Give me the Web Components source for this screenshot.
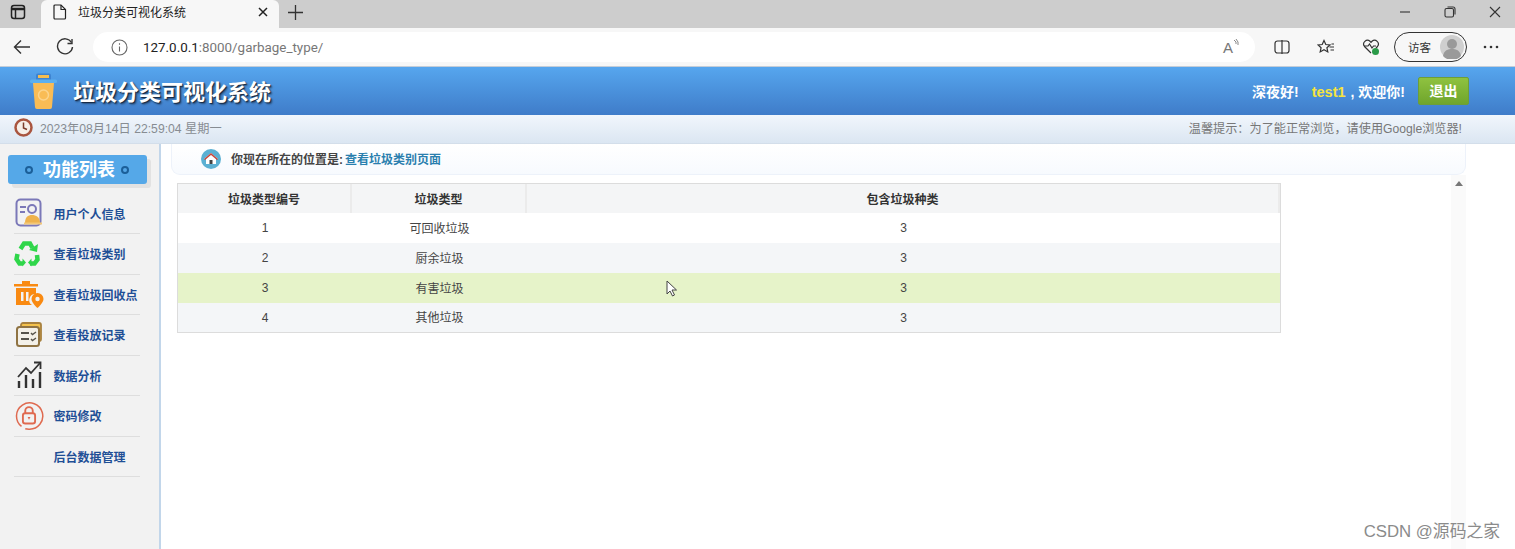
<!DOCTYPE html>
<html lang="zh">
<head>
<meta charset="utf-8">
<title>垃圾分类可视化系统</title>
<style>
  html, body { margin: 0; height: 549px; overflow: hidden; background: #fff; }
  body {
    display: flex;
    flex-direction: column;
    position: relative;
    font-family: "Liberation Sans", "Noto Sans CJK SC", sans-serif;
  }
  svg { display: block; }
</style>
</head>
<body>
  <browser-tabs></browser-tabs>
  <browser-toolbar></browser-toolbar>
  <app-header></app-header>
  <status-bar></status-bar>
  <app-body>
    <side-menu slot="menu">
      <menu-item label="用户个人信息">
        <svg slot="icon" width="30" height="30" viewBox="0 0 30 30" fill="none">
          <rect x="2.500" y="1.500" width="24" height="26" rx="4" stroke="#7b78b8" stroke-width="2"/>
          <path d="M6 9h6M6 14h5" stroke="#7b78b8" stroke-width="2"/>
          <circle cx="18" cy="11" r="4" stroke="#7b78b8" stroke-width="2" fill="#f2f2f2"/>
          <path d="M11 25c0-6 3-8 7-8s8 2 8 8z" fill="#eeb24c"/>
          <path d="M10 25.500h18" stroke="#f4c877" stroke-width="2"/>
        </svg>
      </menu-item>
      <menu-item label="查看垃圾类别">
        <svg slot="icon" width="26" height="27" viewBox="0 0 26 27" fill="#2fd64a">
          <path d="M6.500 9L10 3.500h6L18.500 8" fill="none" stroke="#2fd64a" stroke-width="4.500"/>
          <path d="M15 10l8 2 1-8z"/>
          <path d="M3.500 14L2.500 19l3 4.500H9" fill="none" stroke="#2fd64a" stroke-width="4.500"/>
          <path d="M8.500 18.500v8l3.500-4z"/>
          <path d="M23 15l.500 4.500-3 4H16" fill="none" stroke="#2fd64a" stroke-width="4.500"/>
          <path d="M17.500 18.500v8l-3.500-4z"/>
        </svg>
      </menu-item>
      <menu-item label="查看垃圾回收点">
        <svg slot="icon" width="30" height="30" viewBox="0 0 30 30" fill="#f98a12">
          <path d="M0 5h24v2.500H0zM8 2h8v3H8z"/>
          <path d="M2 9h20v6a6 6 0 0 0-4 11H2z"/>
          <path d="M7 13h2.500v9H7zM12 13h2.500v9H12z" fill="#f2f2f2"/>
          <path d="M23.500 14a6 6 0 0 1 6 6c0 4-6 9-6 9s-6-5-6-9a6 6 0 0 1 6-6z"/>
          <circle cx="23.500" cy="20" r="2.200" fill="#f2f2f2"/>
        </svg>
      </menu-item>
      <menu-item label="查看投放记录">
        <svg slot="icon" width="30" height="30" viewBox="0 0 30 30" fill="none">
          <path d="M7 6V5c0-1 1-2 2-2h16c1 0 2 1 2 2v14c0 1-1 2-2 2h-1" stroke="#a8813f" stroke-width="1.800" fill="#f4c24c"/>
          <rect x="3" y="7" width="22" height="19" rx="2.500" fill="#f3f0e8" stroke="#8f7343" stroke-width="2"/>
          <path d="M7 13h8M7 19h8" stroke="#55524a" stroke-width="1.800"/>
          <path d="M17 13l1.500 1.500L22 12M17 19l1.500 1.500L22 18" stroke="#55524a" stroke-width="1.400"/>
        </svg>
      </menu-item>
      <menu-item label="数据分析">
        <svg slot="icon" width="30" height="30" viewBox="0 0 30 30" fill="none" stroke="#333" stroke-width="2.400">
          <path d="M4 17L12 8l5 5 9-10" stroke-width="1.800"/>
          <path d="M20 2.500h6.500V9" stroke-width="1.800"/>
          <path d="M5 21v7M12 15v13M19 19v9M26 12v16"/>
        </svg>
      </menu-item>
      <menu-item label="密码修改">
        <svg slot="icon" width="30" height="30" viewBox="0 0 32 32" fill="none" stroke="#df6a50">
          <path d="M8 27A14 14 0 1 1 16 30 14 14 0 0 1 12 29.500" stroke-width="1.600"/>
          <rect x="9.500" y="13" width="13" height="11" rx="2.500" stroke-width="2"/>
          <path d="M12 13v-2.500a4 4 0 0 1 8 0V13" stroke-width="2"/>
          <path d="M14.500 17h3l-1.500 3z" fill="#df6a50" stroke="none"/>
        </svg>
      </menu-item>
      <menu-item label="后台数据管理"></menu-item>
    </side-menu>
    <bread-crumb slot="crumb" link="查看垃圾类别页面"></bread-crumb>
    <garbage-table slot="content"></garbage-table>
  </app-body>
  <mouse-cursor></mouse-cursor>
  <water-mark>CSDN @源码之家</water-mark>

<script>
  class BrowserTabs extends HTMLElement {
    constructor() {
      super();
      this.attachShadow({ mode: 'open' });
    }
    connectedCallback() {
      this.shadowRoot.innerHTML = `
        <style>
          :host { display: flex; height: 28px; background: #cdcdcd; align-items: stretch; flex: none; color: #222; }
          .side { width: 41px; display: flex; align-items: center; justify-content: center; box-sizing: border-box; padding: 0 5px 4px 0; }
          .tab {
            width: 238px; background: #f7f7f7; border-radius: 6px 6px 0 0;
            display: flex; align-items: center; padding: 0 0 4px 12px; box-sizing: border-box;
          }
          .title { font-size: 12px; margin: -2px 0 0 11px; width: 180px; }
          .plus { margin: 5px 0 0 9px; }
          .win { margin-left: auto; display: flex; align-items: center; gap: 33px; padding: 0 14px 4px 0; }
        </style>
        <div class="side">
          <svg width="16" height="16" viewBox="0 0 16 16" fill="none" stroke="#222" stroke-width="1.500">
            <rect x="1.500" y="1.500" width="13" height="13" rx="2.500"/>
            <path d="M1.500 5h13" stroke-width="2.500"/><path d="M5.500 5v9"/>
          </svg>
        </div>
        <div class="tab">
          <svg width="14" height="16" viewBox="0 0 14 16" fill="none" stroke="#222" stroke-width="1.200">
            <path d="M2 1h6l4.500 4.500V14a1 1 0 0 1-1 1H2a1 1 0 0 1-1-1V2a1 1 0 0 1 1-1z"/><path d="M8 1v4.500h4.500"/>
          </svg>
          <span class="title">垃圾分类可视化系统</span>
          <svg width="10" height="10" viewBox="0 0 10 10" stroke="#222" stroke-width="1.500"><path d="M1 1l8 8M9 1L1 9"/></svg>
        </div>
        <svg class="plus" width="15" height="15" viewBox="0 0 15 15" stroke="#333" stroke-width="1.300"><path d="M7.500 0v15M0 7.500h15"/></svg>
        <div class="win">
          <svg width="12" height="12" viewBox="0 0 12 12" stroke="#333" stroke-width="1.100"><path d="M1 6h10"/></svg>
          <svg width="12" height="12" viewBox="0 0 12 12" fill="none" stroke="#333" stroke-width="1.100">
            <rect x="1" y="2.500" width="8.500" height="8.500" rx="1.500"/><path d="M3.500 1H9a2 2 0 0 1 2 2v5.500"/>
          </svg>
          <svg width="12" height="12" viewBox="0 0 12 12" stroke="#333" stroke-width="1.100"><path d="M1 1l10 10M11 1L1 11"/></svg>
        </div>
      `;
    }
  }
  customElements.define('browser-tabs', BrowserTabs);

  class BrowserToolbar extends HTMLElement {
    constructor() {
      super();
      this.attachShadow({ mode: 'open' });
    }
    connectedCallback() {
      this.shadowRoot.innerHTML = `
        <style>
          :host {
            display: flex; height: 39px; box-sizing: border-box; flex: none; align-items: center;
            background: #f7f7f7; border-bottom: 1px solid #c4cdd8; padding: 0 16px 0 13px;
          }
          .nav { display: flex; align-items: center; gap: 25px; width: 80px; flex: none; }
          .address {
            width: 1162px; height: 30px; background: #fff; border-radius: 15px; flex: none;
            display: flex; align-items: center; padding: 0 16px 0 18px; box-sizing: border-box;
          }
          .url { font: 13.400px "Roboto", "Liberation Sans", sans-serif; margin-left: 15px; color: #777; flex: 1; }
          .url b { font-weight: 400; color: #222; }
          .read { font: 15px "Liberation Sans", sans-serif; color: #777; }
          .tools { display: flex; align-items: center; gap: 27px; margin-left: 19px; }
          .profile {
            width: 73px; height: 30px; box-sizing: border-box; border: 1.500px solid #333; border-radius: 15px;
            display: flex; align-items: center; justify-content: space-between; padding: 0 2px 0 13px;
            font-size: 11.500px; color: #333; margin-left: -13px;
          }
          .dots { margin-left: -11px; }
        </style>
        <div class="nav">
          <svg width="18" height="16" viewBox="0 0 18 16" fill="none" stroke="#333" stroke-width="1.400"><path d="M17 8H1.500M8 1.500L1.500 8 8 14.500"/></svg>
          <svg width="18" height="18" viewBox="0 0 18 18" fill="none" stroke="#333" stroke-width="1.400"><path d="M15.500 4.500A7.500 7.500 0 1 0 16.500 9"/><path d="M16 1v4.500h-4.500"/></svg>
        </div>
        <div class="address">
          <svg width="17" height="17" viewBox="0 0 17 17" fill="none" stroke="#666" stroke-width="1.100"><circle cx="8.500" cy="8.500" r="7.500"/><path d="M8.500 7.500v5M8.500 4.300v1.500"/></svg>
          <span class="url"><b>127.0.0.1</b>:8000/garbage_type/</span>
          <span class="read">A<svg style="display:inline;vertical-align:6px" width="6" height="8" viewBox="0 0 6 8" fill="none" stroke="#888"><path d="M1 1q3 2 2 4M3 0q3 3 2 6"/></svg></span>
        </div>
        <div class="tools">
          <svg width="16" height="14" viewBox="0 0 16 14" fill="none" stroke="#333" stroke-width="1.200"><rect x="1" y="1" width="14" height="12" rx="2.500"/><path d="M8 0v14"/></svg>
          <svg width="18" height="16" viewBox="0 0 18 16" fill="none" stroke="#333" stroke-width="1.200"><path d="M7 1.500l1.800 4 4.200.4-3.100 2.800.9 4.200L7 10.700 3.200 12.900l.9-4.200L1 5.900l4.200-.4z"/><path d="M12.500 8H17M13.500 11H17M14.500 5H17"/></svg>
          <svg width="18" height="18" viewBox="0 0 18 18" fill="none" stroke="#333" stroke-width="1.200"><path d="M9 15L2.500 8.500a3.800 3.800 0 0 1 5.500-5.200l1 1 1-1a3.800 3.800 0 0 1 5.500 5.200L14 10"/><path d="M2 8h4l1.500-2L10 10l1.500-2H14"/><circle cx="13.500" cy="13.500" r="3.500" fill="#2a9a48" stroke="none"/></svg>
          <div class="profile">访客
            <svg width="24" height="24" viewBox="0 0 24 24"><circle cx="12" cy="12" r="12" fill="#cfcfcf"/><circle cx="12" cy="9" r="5" fill="#9a9a9a"/><path d="M3 21c1-6 5-7 9-7s8 1 9 7a12 12 0 0 1-18 0z" fill="#9a9a9a"/></svg>
          </div>
          <svg class="dots" width="16" height="4" viewBox="0 0 16 4" fill="#333"><circle cx="2" cy="2" r="1.300"/><circle cx="8" cy="2" r="1.300"/><circle cx="14" cy="2" r="1.300"/></svg>
        </div>
      `;
    }
  }
  customElements.define('browser-toolbar', BrowserToolbar);

  class AppHeader extends HTMLElement {
    constructor() {
      super();
      this.attachShadow({ mode: 'open' });
    }
    connectedCallback() {
      this.shadowRoot.innerHTML = `
        <style>
          :host {
            display: flex; height: 48px; flex: none; align-items: center; box-sizing: border-box;
            padding: 0 46px 0 30px; color: #fff;
            background: linear-gradient(#56a6ee, #3f7cc9);
          }
          h1 {
            margin: 3px 0 0 16px; font-size: 22px; font-weight: 700; line-height: 1;
            text-shadow: 1px 1px 1px #16263f, 2px 2px 2px rgba(0,0,0,.35);
          }
          .hello { margin-left: auto; font-size: 14px; font-weight: 700; display: flex; align-items: baseline; }
          .user { color: #f6e43c; margin: 0 5px 0 13px; font-size: 14.500px; }
          button {
            all: unset; box-sizing: border-box; width: 51px; height: 28px; margin-left: 13px; text-align: center;
            font-size: 14px; font-weight: 700; line-height: 26px; color: #fff; border-radius: 2px;
            border: 1px solid #6d9e39; background: linear-gradient(#8fc240, #6fa52c);
          }
        </style>
        <svg width="27" height="36" viewBox="0 0 27 36">
          <path d="M6 2.500a2 2 0 0 1 2-2h11a2 2 0 0 1 2 2V7H6z" fill="#3e83d0"/>
          <rect x="8" y="2" width="11" height="3" fill="#f5bd50"/>
          <rect x="0" y="6.500" width="27" height="3.500" rx="1.500" fill="#5bb0f0"/>
          <path d="M3 10h21l-2 24a2 2 0 0 1-2 2H7a2 2 0 0 1-2-2z" fill="#f9bc55"/>
          <circle cx="13.500" cy="22" r="5" fill="none" stroke="#fbd48c" stroke-width="1.500"/>
        </svg>
        <h1>垃圾分类可视化系统</h1>
        <div class="hello"><span>深夜好!</span><span class="user">test1</span><span>, 欢迎你!</span></div>
        <button>退出</button>
      `;
    }
  }
  customElements.define('app-header', AppHeader);

  class StatusBar extends HTMLElement {
    constructor() {
      super();
      this.attachShadow({ mode: 'open' });
    }
    connectedCallback() {
      this.shadowRoot.innerHTML = `
        <style>
          :host {
            display: flex; height: 29px; flex: none; align-items: center; box-sizing: border-box;
            padding: 0 53px 3px 14px; font-size: 12.200px; color: #878c92;
            background: linear-gradient(#f1f6fc, #dbe6f2); border-bottom: 1px solid #d3deea;
          }
          .time { margin-left: 7px; }
          .tip { margin-left: auto; color: #777; font-size: 12.150px; }
        </style>
        <svg width="19" height="19" viewBox="0 0 19 19" fill="none">
          <circle cx="9.500" cy="9.500" r="8" fill="#f6efe8" stroke="#a9553f" stroke-width="2.500"/>
          <path d="M9.500 4.500v5.500l3.500 1.500" stroke="#7b3c2b" stroke-width="1.500"/>
        </svg>
        <span class="time">2023年08月14日 22:59:04 星期一</span>
        <span class="tip">温馨提示：为了能正常浏览，请使用Google浏览器!</span>
      `;
    }
  }
  customElements.define('status-bar', StatusBar);

  class AppBody extends HTMLElement {
    constructor() {
      super();
      this.attachShadow({ mode: 'open' });
    }
    connectedCallback() {
      this.shadowRoot.innerHTML = `
        <style>
          :host { display: flex; flex: 1; min-height: 0; }
          .main { flex: 1; padding-left: 10px; padding-right: 49px; display: flex; flex-direction: column; min-width: 0; }
          .row { flex: 1; display: flex; padding-left: 6px; }
          .scroll { margin-left: auto; width: 15px; background: #fafafa; display: flex; justify-content: center; padding-top: 6px; box-sizing: border-box; }
          .arrow { width: 0; height: 0; border: 4.500px solid transparent; border-top: 0; border-bottom: 5px solid #777; }
        </style>
        <slot name="menu"></slot>
        <div class="main">
          <slot name="crumb"></slot>
          <div class="row">
            <slot name="content"></slot>
            <div class="scroll"><div class="arrow"></div></div>
          </div>
        </div>
      `;
    }
  }
  customElements.define('app-body', AppBody);

  class SideMenu extends HTMLElement {
    constructor() {
      super();
      this.attachShadow({ mode: 'open' });
    }
    connectedCallback() {
      this.shadowRoot.innerHTML = `
        <style>
          :host {
            display: block; width: 161px; flex: none; box-sizing: border-box; padding: 11px 19px 0 14px;
            background: #f2f2f2; border-right: 2px solid #c2d6ea;
          }
          .head {
            margin: 0 -7px 9.500px -6px; height: 29px; box-sizing: border-box; padding: 0 0 3px 16.500px;
            background: #55a8e8; border-radius: 3px; color: #fff;
            font-size: 18px; font-weight: 700; display: flex; align-items: center; gap: 10.500px;
            box-shadow: 4px 4px 0 #e2e2e2;
          }
          span { margin-right: -5px; }
          i { width: 4px; height: 4px; border-radius: 50%; background: #55a8e8; border: 2.500px solid #1b5f99; margin-top: 3px; }
        </style>
        <div class="head"><i></i><span>功能列表</span><i></i></div>
        <slot></slot>
      `;
    }
  }
  customElements.define('side-menu', SideMenu);

  class MenuItem extends HTMLElement {
    constructor() {
      super();
      this.attachShadow({ mode: 'open' });
    }
    connectedCallback() {
      this.shadowRoot.innerHTML = `
        <style>
          :host {
            display: grid; grid-template-columns: 39.500px 1fr; align-items: center; height: 40.500px; box-sizing: border-box;
            border-bottom: 1px solid #dedede; color: #1f4f96; font-size: 12px; font-weight: 700;
          }
          .icon { display: flex; align-items: center; justify-content: flex-start; }
        </style>
        <div class="icon"><slot name="icon"></slot></div>
        <span>${this.getAttribute('label')}</span>
      `;
    }
  }
  customElements.define('menu-item', MenuItem);

  class BreadCrumb extends HTMLElement {
    constructor() {
      super();
      this.attachShadow({ mode: 'open' });
    }
    connectedCallback() {
      this.shadowRoot.innerHTML = `
        <style>
          :host {
            display: flex; height: 31px; box-sizing: border-box; align-items: center; padding-left: 29px;
            background: linear-gradient(#fff, #f7fafe); border: 1px solid #edf2fa; border-top: 0; border-radius: 0 0 9px 9px;
            font-size: 12px; font-weight: 700; color: #444;
          }
          svg { margin-right: 10px; }
          span, a { margin-top: -2px; }
          a { color: #2a7fae; margin-left: 2px; }
        </style>
        <svg width="20" height="20" viewBox="0 0 20 20">
          <circle cx="10" cy="10" r="10" fill="#5bb0d3"/>
          <path d="M10 4l7 6h-2v5H5v-5H3z" fill="#fff"/>
          <path d="M10 4l7 6-1 1-6-5-6 5-1-1z" fill="#c8473c"/>
          <rect x="8.500" y="11" width="3" height="4" fill="#444"/>
        </svg>
        <span>你现在所在的位置是:</span><a>${this.getAttribute('link')}</a>
      `;
    }
  }
  customElements.define('bread-crumb', BreadCrumb);

  class GarbageTable extends HTMLElement {
    constructor() {
      super();
      this.attachShadow({ mode: 'open' });
    }
    connectedCallback() {
      const rows = [['1', '可回收垃圾', '3'], ['2', '厨余垃圾', '3'], ['3', '有害垃圾', '3'], ['4', '其他垃圾', '3']];
      const body = rows.map(r => `<tr>${r.map(c => `<td>${c}</td>`).join('')}</tr>`).join('');
      this.shadowRoot.innerHTML = `
        <style>
          :host { display: block; margin-top: 8px; width: 1104px; align-self: flex-start; }
          table {
            width: 100%; border-collapse: separate; border-spacing: 0; table-layout: fixed;
            border: 1px solid #dcdcdc; font-size: 12px; color: #444;
          }
          th { height: 29px; padding: 0; background: #f4f5f6; color: #333; border-right: 2px solid #ebebeb; }
          td { height: 30px; padding: 0; text-align: center; background: #fff; box-sizing: border-box; }
          td:nth-child(2) { padding-bottom: 2px; }
          tr:last-child td { height: 29px; }
          tr:nth-child(even) td { background: #f4f6f8; }
          tr:nth-child(3) td { background: #e6f3c9; }
        </style>
        <table>
          <colgroup><col style="width:174px"><col style="width:175px"><col></colgroup>
          <thead><tr><th>垃圾类型编号</th><th>垃圾类型</th><th>包含垃圾种类</th></tr></thead>
          <tbody>${body}</tbody>
        </table>
      `;
    }
  }
  customElements.define('garbage-table', GarbageTable);

  class MouseCursor extends HTMLElement {
    constructor() {
      super();
      this.attachShadow({ mode: 'open' });
    }
    connectedCallback() {
      this.shadowRoot.innerHTML = `
        <style>:host { position: absolute; left: 666px; top: 280px; }</style>
        <svg style="display:block" width="12" height="17" viewBox="0 0 12 17"><path d="M1 1v13l3-3 2.500 5 2-1-2.500-5h4.500z" fill="#fff" stroke="#444" stroke-width="1"/></svg>
      `;
    }
  }
  customElements.define('mouse-cursor', MouseCursor);

  class WaterMark extends HTMLElement {
    constructor() {
      super();
      this.attachShadow({ mode: 'open' });
    }
    connectedCallback() {
      this.shadowRoot.innerHTML = `
        <style>:host { position: absolute; right: 15px; bottom: 7px; font-size: 16.800px; color: #8b8b8b; line-height: 20px; }</style>
        <slot></slot>
      `;
    }
  }
  customElements.define('water-mark', WaterMark);
</script>
</body>
</html>
